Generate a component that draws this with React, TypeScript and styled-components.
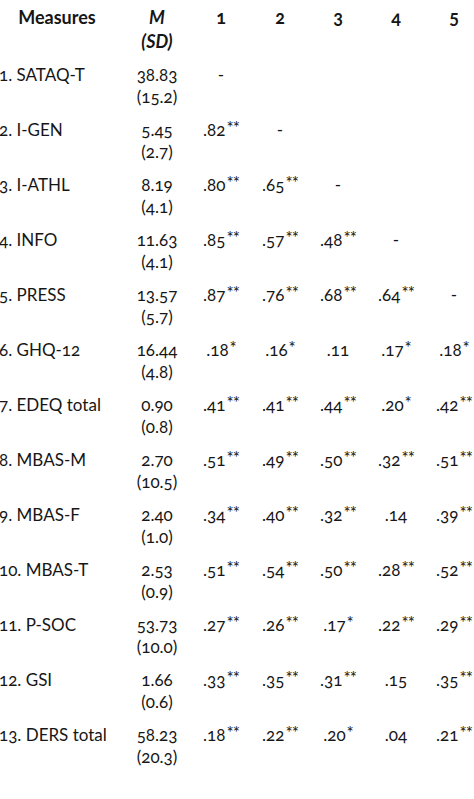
import React from 'react';
import styled, { createGlobalStyle } from 'styled-components';

const GlobalStyle = createGlobalStyle`
  html, body {
    margin: 0;
    padding: 0;
    background: #ffffff;
    overflow: hidden;
  }
  body {
    font-family: Lato, "Open Sans", sans-serif;
    color: #161616;
    font-variant-numeric: oldstyle-nums;
    font-feature-settings: "onum" 1;
  }
`;

const Page = styled.div`
  width: 474px;
  height: 799px;
  overflow: hidden;
  padding-top: 5px;
  box-sizing: border-box;
`;

const Table = styled.table`
  border-collapse: collapse;
  table-layout: fixed;
  width: 484px;
  margin-left: -1px;
`;

const Col = styled.col<{ $w: number }>`
  width: ${({ $w }) => $w}px;
`;

const HeadCell = styled.th<{ $italic?: boolean; $shift?: number }>`
  font-weight: 700;
  font-style: ${({ $italic }) => ($italic ? 'italic' : 'normal')};
  font-size: 18px;
  line-height: 24px;
  text-align: center;
  vertical-align: top;
  padding: 0 ${({ $shift }) => $shift ?? 0}px 8px 0;
`;

const LabelCell = styled.td`
  font-size: 17px;
  line-height: 22px;
  vertical-align: top;
  white-space: nowrap;
  padding: 3px 0 8px 0;
`;

const NumCell = styled.td`
  font-size: 17px;
  line-height: 22px;
  text-align: center;
  vertical-align: top;
  white-space: nowrap;
  padding: 3px 0 8px 0;
`;

const Line = styled.div``;

const Stars = styled.sup`
  font-size: 17px;
  line-height: 0;
  vertical-align: 0;
  position: relative;
  top: -2px;
  letter-spacing: -1px;
  margin-left: 1px;
`;

type Row = {
  label: string;
  mean: string;
  sd: string;
  r: string[];
};

const rows: Row[] = [
  { label: '1. SATAQ-T', mean: '38.83', sd: '(15.2)', r: ['-'] },
  { label: '2. I-GEN', mean: '5.45', sd: '(2.7)', r: ['.82**', '-'] },
  { label: '3. I-ATHL', mean: '8.19', sd: '(4.1)', r: ['.80**', '.65**', '-'] },
  { label: '4. INFO', mean: '11.63', sd: '(4.1)', r: ['.85**', '.57**', '.48**', '-'] },
  { label: '5. PRESS', mean: '13.57', sd: '(5.7)', r: ['.87**', '.76**', '.68**', '.64**', '-'] },
  { label: '6. GHQ-12', mean: '16.44', sd: '(4.8)', r: ['.18*', '.16*', '.11', '.17*', '.18*'] },
  { label: '7. EDEQ total', mean: '0.90', sd: '(0.8)', r: ['.41**', '.41**', '.44**', '.20*', '.42**'] },
  { label: '8. MBAS-M', mean: '2.70', sd: '(10.5)', r: ['.51**', '.49**', '.50**', '.32**', '.51**'] },
  { label: '9. MBAS-F', mean: '2.40', sd: '(1.0)', r: ['.34**', '.40**', '.32**', '.14', '.39**'] },
  { label: '10. MBAS-T', mean: '2.53', sd: '(0.9)', r: ['.51**', '.54**', '.50**', '.28**', '.52**'] },
  { label: '11. P-SOC', mean: '53.73', sd: '(10.0)', r: ['.27**', '.26**', '.17*', '.22**', '.29**'] },
  { label: '12. GSI', mean: '1.66', sd: '(0.6)', r: ['.33**', '.35**', '.31**', '.15', '.35**'] },
  { label: '13. DERS total', mean: '58.23', sd: '(20.3)', r: ['.18**', '.22**', '.20*', '.04', '.21**'] },
];

const Value: React.FC<{ text: string }> = ({ text }) => {
  const m = text.match(/^([^*]*)(\**)$/);
  const base = m ? m[1] : text;
  const stars = m ? m[2] : '';
  return (
    <>
      {base}
      {stars && <Stars>{stars}</Stars>}
    </>
  );
};

export default function App() {
  return (
    <Page>
      <GlobalStyle />
      <Table>
        <colgroup>
          <Col $w={124} />
          <Col $w={68} />
          <Col $w={60} />
          <Col $w={58} />
          <Col $w={58} />
          <Col $w={58} />
          <Col $w={58} />
        </colgroup>
        <thead>
          <tr>
            <HeadCell $shift={8}>Measures</HeadCell>
            <HeadCell $italic>
              <Line>M</Line>
              <Line>(SD)</Line>
            </HeadCell>
            {[1, 2, 3, 4, 5].map((n) => (
              <HeadCell key={n}>{n}</HeadCell>
            ))}
          </tr>
        </thead>
        <tbody>
          {rows.map((row) => (
            <tr key={row.label}>
              <LabelCell>{row.label}</LabelCell>
              <NumCell>
                <Line>{row.mean}</Line>
                <Line>{row.sd}</Line>
              </NumCell>
              {[0, 1, 2, 3, 4].map((i) => (
                <NumCell key={i}>{row.r[i] ? <Value text={row.r[i]} /> : null}</NumCell>
              ))}
            </tr>
          ))}
        </tbody>
      </Table>
    </Page>
  );
}
